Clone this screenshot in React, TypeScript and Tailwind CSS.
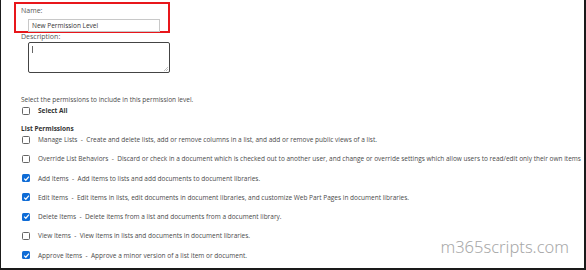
import React from "react";

const rows: { name: string; desc: string; checked: boolean }[] = [
  { name: "Manage Lists", desc: "Create and delete lists, add or remove columns in a list, and add or remove public views of a list.", checked: false },
  { name: "Override List Behaviors", desc: "Discard or check in a document which is checked out to another user, and change or override settings which allow users to read/edit only their own items", checked: false },
  { name: "Add Items", desc: "Add items to lists and add documents to document libraries.", checked: true },
  { name: "Edit Items", desc: "Edit items in lists, edit documents in document libraries, and customize Web Part Pages in document libraries.", checked: true },
  { name: "Delete Items", desc: "Delete items from a list and documents from a document library.", checked: true },
  { name: "View Items", desc: "View items in lists and documents in document libraries.", checked: false },
  { name: "Approve Items", desc: "Approve a minor version of a list item or document.", checked: true },
];

function Box({ checked }: { checked: boolean }) {
  if (checked) {
    return (
      <span className="flex h-[8px] w-[8px] shrink-0 items-center justify-center rounded-[1.5px] bg-[#0f6cd6]">
        <svg width="7" height="7" viewBox="0 0 8 8">
          <path d="M1.3 4.2 L3.2 6 L6.8 1.8" fill="none" stroke="white" strokeWidth="1.4" />
        </svg>
      </span>
    );
  }
  return <span className="h-[8px] w-[8px] shrink-0 rounded-[1.5px] border border-[#666] bg-white" />;
}

export default function App() {
  return (
    <div
      className="relative h-[270px] w-[586px] overflow-hidden border-b-2 border-l border-r-2 border-[#1a1a1a] bg-white text-[#4a4a4a]"
      style={{ fontFamily: '"Open Sans", "Noto Sans", sans-serif' }}
    >
      <div className="ml-[13px] mt-[2px] h-[31px] w-[156px] border-2 border-[#e8161b] pl-[5px] pt-[2px]">
        <div className="text-[7px] leading-[10px] text-[#555]">Name:</div>
        <div className="ml-[7px] mt-[3px] flex h-[13px] w-[132px] items-center border border-[#c8c8c8] pl-[3px] text-[6.5px] text-[#333]">
          New Permission Level
        </div>
      </div>
      <div className="ml-[20px] text-[7px] leading-[8px] text-[#555]">Description:</div>
      <div className="relative ml-[27px] mt-[1px] h-[31px] w-[142px] rounded-[2px] border-[1.5px] border-[#444]">
        <div className="ml-[3px] mt-[3px] h-[7px] w-px bg-[#666]" />
        <svg className="absolute bottom-[1px] right-[1px]" width="4" height="4" viewBox="0 0 4 4">
          <path d="M0 4 L4 0 M2 4 L4 2" stroke="#999" strokeWidth="0.6" />
        </svg>
      </div>
      <div className="ml-[20px] mt-[22px] text-[6.5px] leading-[9px]">Select the permissions to include in this permission level.</div>
      <div className="ml-[21px] mt-[2px] flex items-center gap-[8px]">
        <Box checked={false} />
        <span className="text-[6.5px] font-bold leading-[9px] text-[#333]">Select All</span>
      </div>
      <div className="ml-[20px] mt-[9px] text-[6.5px] font-bold leading-[9px] text-[#333]">List Permissions</div>
      <div className="ml-[21px] mt-[2px] flex flex-col gap-[10.3px]">
        {rows.map((r) => (
          <div key={r.name} className="flex items-center gap-[8px] text-[6.5px] leading-[9px]">
            <Box checked={r.checked} />
            <span className="whitespace-nowrap">
              {r.name}&nbsp;&nbsp;-&nbsp;&nbsp;{r.desc}
            </span>
          </div>
        ))}
      </div>
      <div className="absolute bottom-[12px] right-[15px] text-[16.5px] font-light leading-[18px] text-[#a8a8a8]" style={{ fontFamily: '"Noto Sans", "Open Sans", sans-serif' }}>
        m365scripts.com
      </div>
    </div>
  );
}
